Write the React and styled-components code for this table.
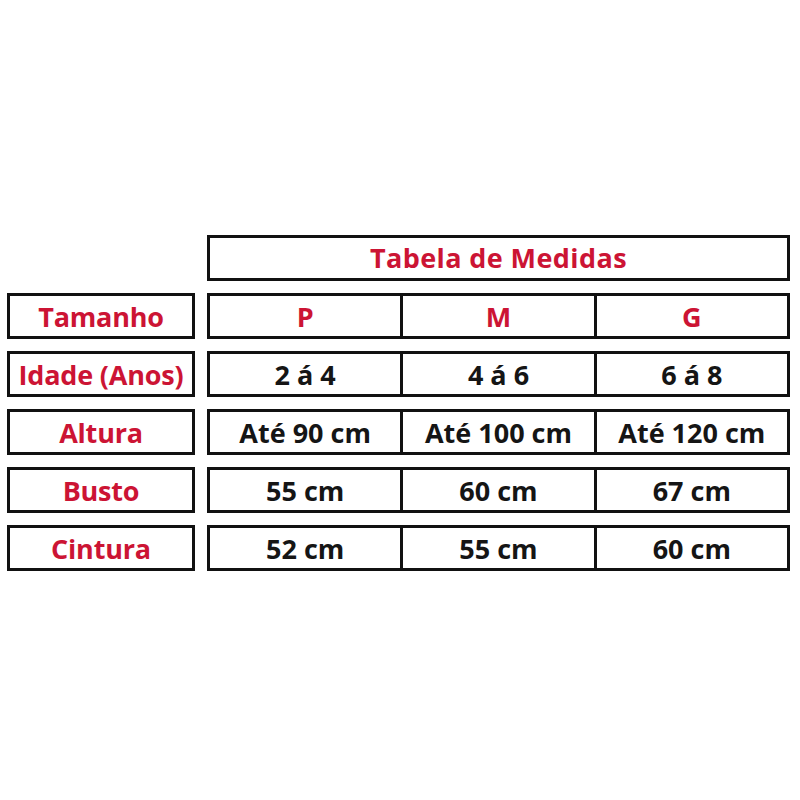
import styled, { createGlobalStyle } from "styled-components";

const GlobalStyle = createGlobalStyle`
  body {
    margin: 0;
    background: #ffffff;
    font-family: "Open Sans", "Liberation Sans", sans-serif;
  }
`;

const rows = [
  { label: "Tamanho", values: ["P", "M", "G"], red: true },
  { label: "Idade (Anos)", values: ["2 á 4", "4 á 6", "6 á 8"] },
  { label: "Altura", values: ["Até 90 cm", "Até 100 cm", "Até 120 cm"] },
  { label: "Busto", values: ["55 cm", "60 cm", "67 cm"] },
  { label: "Cintura", values: ["52 cm", "55 cm", "60 cm"] },
];

const SizeTable = () => {
  const body = rows.map(({ label, values, red }) => (
    <Row key={label}>
      <LabelBox>{label}</LabelBox>
      <ValuesBox>
        {values.map((v) => (
          <Cell key={v} $red={red}>
            {v}
          </Cell>
        ))}
      </ValuesBox>
    </Row>
  ));

  return (
    <Page>
      <GlobalStyle />
      <Table>
        <Row>
          <Spacer />
          <TitleBox>Tabela de Medidas</TitleBox>
        </Row>
        {body}
      </Table>
    </Page>
  );
};

export default SizeTable;

const Page = styled.div`
  width: 800px;
  height: 800px;
  padding: 235px 0 0 7px;
  box-sizing: border-box;
`;

const Table = styled.div`
  display: flex;
  flex-direction: column;
  gap: 12px;
`;

const Row = styled.div`
  display: grid;
  grid-template-columns: 188px 583px;
  column-gap: 12px;
  height: 46px;
`;

const Spacer = styled.div``;

const Box = styled.div`
  border: 3px solid #111;
  box-sizing: border-box;
  display: flex;
  align-items: center;
  justify-content: center;
  font-weight: 700;
  font-size: 27px;
  line-height: 1;
`;

const TitleBox = styled(Box)`
  color: #cc1434;
  padding-bottom: 2px;
  letter-spacing: 0.4px;
`;

const LabelBox = styled(Box)`
  color: #cc1434;
  white-space: nowrap;
  letter-spacing: -0.2px;
`;

const ValuesBox = styled(Box)`
  justify-content: stretch;
  align-items: stretch;
`;

const Cell = styled.div`
  flex: 1;
  display: flex;
  align-items: center;
  justify-content: center;
  color: ${(p) => (p.$red ? "#cc1434" : "#151515")};
  & + & {
    border-left: 3px solid #111;
  }
`;
